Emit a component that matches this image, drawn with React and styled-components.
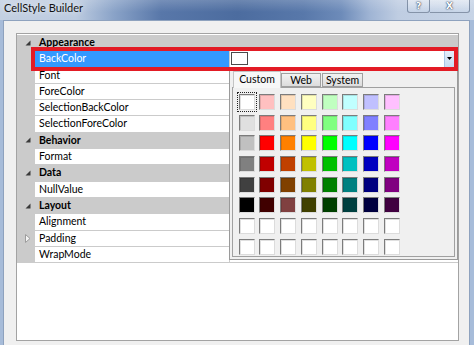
import React from "react";
import styled, { createGlobalStyle } from "styled-components";

const GlobalStyle = createGlobalStyle`
  * { box-sizing: border-box; }
  html, body { margin: 0; padding: 0; }
  body {
    width: 474px;
    height: 345px;
    overflow: hidden;
    background: #a7bcd9;
    font-family: Lato, "Segoe UI", "Noto Sans", sans-serif;
    color: #000;
  }
`;

const rows = [
  { cat: true, label: "Appearance" },
  { label: "BackColor", selected: true },
  { label: "Font" },
  { label: "ForeColor" },
  { label: "SelectionBackColor" },
  { label: "SelectionForeColor" },
  { cat: true, label: "Behavior" },
  { label: "Format" },
  { cat: true, label: "Data" },
  { label: "NullValue" },
  { cat: true, label: "Layout" },
  { label: "Alignment" },
  { label: "Padding", collapsed: true },
  { label: "WrapMode" },
];

const palette = [
  ["#ffffff", "#ffc0c0", "#ffe0c0", "#ffffc0", "#c0ffc0", "#c0ffff", "#c0c0ff", "#ffc0ff"],
  ["#e0e0e0", "#ff8080", "#ffc080", "#ffff80", "#80ff80", "#80ffff", "#8080ff", "#ff80ff"],
  ["#c0c0c0", "#ff0000", "#ff8000", "#ffff00", "#00ff00", "#00ffff", "#0000ff", "#ff00ff"],
  ["#808080", "#c00000", "#c04000", "#c0c000", "#00c000", "#00c0c0", "#0000c0", "#c000c0"],
  ["#404040", "#800000", "#804000", "#808000", "#008000", "#008080", "#000080", "#800080"],
  ["#000000", "#400000", "#804040", "#404000", "#004000", "#004040", "#000040", "#400040"],
  ["#ffffff", "#ffffff", "#ffffff", "#ffffff", "#ffffff", "#ffffff", "#ffffff", "#ffffff"],
  ["#ffffff", "#ffffff", "#ffffff", "#ffffff", "#ffffff", "#ffffff", "#ffffff", "#ffffff"],
];

function ExpandedGlyph() {
  return (
    <svg width="6" height="6" viewBox="0 0 6 6">
      <path d="M5.5 0.5 L5.5 5.5 L0.5 5.5 Z" fill="#3a3a3a" />
    </svg>
  );
}

function CollapsedGlyph() {
  return (
    <svg width="6" height="9" viewBox="0 0 6 9">
      <path d="M0.5 0.5 L5 4.5 L0.5 8.5 Z" fill="#f4f4f4" stroke="#9c9c9c" strokeWidth="1" />
    </svg>
  );
}

export default function App() {
  return (
    <>
      <GlobalStyle />
      <Window>
        <TitleBar>
          <Title>CellStyle Builder</Title>
          <Caption>
            <CaptionButton $w={23}>?</CaptionButton>
            <CaptionButton $w={40}>X</CaptionButton>
          </Caption>
        </TitleBar>
        <Frame>
          <Panel>
            {rows.map((r, i) =>
              r.cat ? (
                <CatRow key={i}>
                  <Gutter>
                    <ExpandedGlyph />
                  </Gutter>
                  <CatLabel>{r.label}</CatLabel>
                </CatRow>
              ) : r.selected ? (
                <SelRow key={i}>
                  <Gutter />
                  <Highlight>
                    <SelName>{r.label}</SelName>
                    <SelValue>
                      <Swatch />
                      <DropButton>
                        <svg width="5" height="3" viewBox="0 0 5 3">
                          <path d="M0 0 L5 0 L2.5 3 Z" fill="#000" />
                        </svg>
                      </DropButton>
                    </SelValue>
                  </Highlight>
                </SelRow>
              ) : (
                <PropRow key={i}>
                  <Gutter>{r.collapsed && <CollapsedGlyph />}</Gutter>
                  <PropName>{r.label}</PropName>
                  <PropValue />
                </PropRow>
              )
            )}

            <Popup>
              <TabStrip>
                <Tab $active $w={48}>Custom</Tab>
                <Tab $w={40}>Web</Tab>
                <Tab $w={41} $gap={1}>System</Tab>
              </TabStrip>
              <TabPage>
                <Swatches>
                  {palette.flat().map((c, i) => (
                    <Cell key={i} $focus={i === 0} style={{ background: c }} />
                  ))}
                </Swatches>
              </TabPage>
            </Popup>
          </Panel>
        </Frame>
      </Window>
    </>
  );
}

const Window = styled.div`
  width: 474px;
  height: 345px;
  display: flex;
  flex-direction: column;
`;

const TitleBar = styled.div`
  height: 20px;
  display: flex;
  justify-content: space-between;
  align-items: flex-start;
  padding-left: 4px;
  background:
    linear-gradient(180deg, rgba(255, 255, 255, 0.18) 0%, rgba(255, 255, 255, 0) 60%),
    linear-gradient(90deg, #c3d0e2 0%, #bccbe0 16%, #8aa3c8 24%, #5877a9 34%, #4c6c9f 50%,
      #5878aa 64%, #6d8bb9 72%, #9fb4d4 78%, #bfcde2 84%, #c7d4e6 100%);
`;

const Title = styled.div`
  font-size: 11px;
  line-height: 16px;
  color: #111;
  text-shadow: 0 0 6px rgba(255, 255, 255, 0.9);
`;

const Caption = styled.div`
  display: flex;
  margin-right: 4px;
`;

const CaptionButton = styled.div`
  width: ${(p) => p.$w}px;
  height: 13px;
  border: 1px solid rgba(60, 80, 110, 0.55);
  border-top: none;
  border-radius: 0 0 3px 3px;
  background: linear-gradient(180deg, rgba(255, 255, 255, 0.45), rgba(200, 215, 235, 0.35));
  color: #fff;
  font-family: "DejaVu Sans", sans-serif;
  font-weight: bold;
  font-size: 9px;
  line-height: 12px;
  text-align: center;
  text-shadow: 0 0 1px #2b3b55, 0 0 2px #2b3b55;
  & + & {
    border-left: none;
    border-radius: 0 0 3px 0;
  }
`;

const Frame = styled.div`
  flex: 1;
  display: flex;
  margin: 0 4px 0 3px;
  padding: 12px 10px 4px 12px;
  background: #f0f0f0;
  border: 1px solid #8ea2be;
  border-bottom: none;
`;

const Panel = styled.div`
  flex: 1;
  position: relative;
  background: #fff;
  border: 1px solid #a3a3a3;
  padding-top: 1px;
  font-size: 10.5px;
`;

const RowBase = styled.div`
  height: 16.3px;
  display: flex;
  align-items: stretch;
`;

const CatRow = styled(RowBase)`
  background: #cbcbcb;
  border-bottom: 1px solid #cbcbcb;
`;

const PropRow = styled(RowBase)`
  border-bottom: 1px solid #cbcbcb;
`;

const SelRow = styled(RowBase)`
  position: relative;
  z-index: 1;
  border-bottom: 1px solid #cbcbcb;
`;

const Gutter = styled.div`
  width: 18px;
  flex: none;
  background: #cbcbcb;
  display: flex;
  align-items: center;
  padding-left: 8px;
`;

const CatLabel = styled.div`
  font-weight: bold;
  padding-left: 4px;
  line-height: 15px;
`;

const PropName = styled.div`
  width: 194px;
  flex: none;
  padding-left: 4px;
  line-height: 15px;
  white-space: nowrap;
`;

const PropValue = styled.div`
  flex: 1;
  border-left: 1px solid #cbcbcb;
`;

const Highlight = styled.div`
  flex: 1;
  display: flex;
  margin-right: 4px;
  outline: 4px solid #e31b25;
`;

const SelName = styled(PropName)`
  background: #3399ff;
  color: #fff;
`;

const SelValue = styled.div`
  flex: 1;
  display: flex;
  align-items: center;
  justify-content: space-between;
  border-left: 1px solid #cbcbcb;
  background: #fff;
  padding-left: 1px;
`;

const Swatch = styled.div`
  width: 17px;
  height: 13px;
  background: #fff;
  border: 1px solid #4a4a4a;
`;

const DropButton = styled.div`
  width: 10px;
  align-self: stretch;
  display: flex;
  align-items: center;
  justify-content: center;
  background: linear-gradient(180deg, #e4eefa, #c7dcf2);
  border-left: 1px solid #a9c6e6;
`;

const Popup = styled.div`
  position: absolute;
  left: 212px;
  top: 37px;
  width: 229px;
  height: 189px;
  z-index: 2;
  display: flex;
  flex-direction: column;
  background: #f0f0f0;
  border: 1px solid #9a9a9a;
  border-top: none;
  padding: 0 2px 2px 2px;
`;

const TabStrip = styled.div`
  height: 16px;
  display: flex;
  align-items: flex-end;
  padding-left: 1px;
`;

const Tab = styled.div`
  position: relative;
  z-index: ${(p) => (p.$active ? 1 : 0)};
  width: ${(p) => p.$w}px;
  height: ${(p) => (p.$active ? 17 : 14)}px;
  margin-left: ${(p) => p.$gap || 0}px;
  margin-bottom: ${(p) => (p.$active ? -1 : 0)}px;
  border: 1px solid ${(p) => (p.$active ? "#c4c4c4" : "#a0a0a0")};
  border-bottom: ${(p) => (p.$active ? "none" : "1px solid #a0a0a0")};
  background: ${(p) => (p.$active ? "#f7f7f7" : "linear-gradient(180deg, #f2f2f2, #dcdcdc)")};
  text-align: center;
  line-height: ${(p) => (p.$active ? 15 : 13)}px;
`;

const TabPage = styled.div`
  flex: 1;
  border: 1px solid #a0a0a0;
  background: #f0f0f0;
  padding: 6px 0 0 5.5px;
`;

const Swatches = styled.div`
  display: grid;
  grid-template-columns: repeat(8, 16px);
  grid-auto-rows: 16px;
  column-gap: 4.8px;
  row-gap: 4.67px;
`;

const Cell = styled.div`
  border: 1px solid;
  border-color: #7c7c7c #dcdcdc #dcdcdc #7c7c7c;
  box-shadow: inset 1px 1px 0 rgba(0, 0, 0, 0.12);
  outline: ${(p) => (p.$focus ? "1px dotted #222" : "none")};
  outline-offset: 1px;
`;
